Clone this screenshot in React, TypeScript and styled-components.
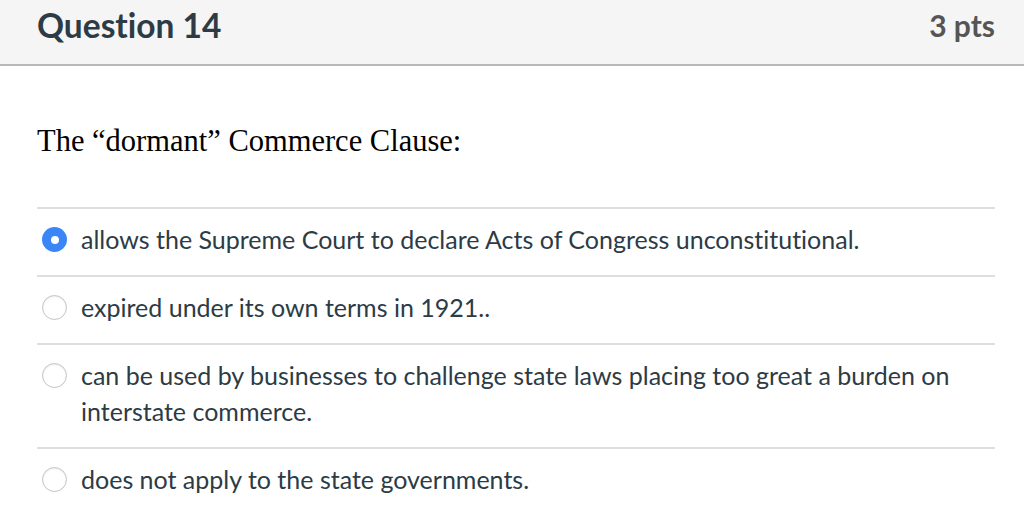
import styled, {createGlobalStyle} from "styled-components"

const GlobalStyle = createGlobalStyle`
    html, body {
        margin: 0;
        padding: 0;
        background: #fff;
    }
`;

const Card = styled.div`
    width: 1024px;
    font-family: Lato, "Liberation Sans", sans-serif;
    font-variant-ligatures: none;
    color: #2d3b45;
`;

const Header = styled.div`
    display: flex;
    justify-content: space-between;
    align-items: center;
    box-sizing: border-box;
    height: 66px;
    padding: 0 29px 14px 37px;
    background-color: #f5f5f5;
    border-bottom: 2px solid #b9b9b9;
`;

const Title = styled.h2`
    margin: 0;
    font-size: 33.5px;
    font-weight: 700;
    color: #2d3b45;
`;

const Points = styled.span`
    font-size: 30px;
    font-weight: 700;
    color: #555;
`;

const Body = styled.div`
    padding: 0 29px 0 37px;
`;

const Prompt = styled.p`
    margin: 0;
    padding: 54px 0 45px 0;
    font-family: "Liberation Serif", "Times New Roman", serif;
    font-size: 30.5px;
    line-height: 42px;
    color: #000;
`;

const Answers = styled.div`
    display: flex;
    flex-direction: column;
`;

const Answer = styled.label`
    display: grid;
    grid-template-columns: 44px 1fr;
    align-items: start;
    padding: 12px 0 18px 0;
    border-top: 2px solid #dedede;
`;

const Radio = styled.span<{checked?: boolean}>`
    box-sizing: border-box;
    width: 25px;
    height: 25px;
    margin: 6px 0 0 5px;
    border-radius: 50%;
    background-color: ${props => props.checked ? "#3b86f7" : "#fff"};
    border: ${props => props.checked ? "none" : "1.5px solid #c4c4c4"};
    box-shadow: ${props => props.checked ? "none" : "inset 0 1px 2px rgba(0,0,0,0.08)"};
    display: grid;
    place-items: center;
    &::after {
        content: "";
        display: ${props => props.checked ? "block" : "none"};
        width: 8px;
        height: 8px;
        border-radius: 50%;
        background: #fff;
    }
`;

const AnswerText = styled.span`
    font-size: 25px;
    line-height: 36px;
    color: #2d3b45;
`;

const answers = [
    {text: "allows the Supreme Court to declare Acts of Congress unconstitutional.", checked: true},
    {text: "expired under its own terms in 1921..", checked: false},
    {text: "can be used by businesses to challenge state laws placing too great a burden on interstate commerce.", checked: false},
    {text: "does not apply to the state governments.", checked: false},
];

const App = () => {
    return (
        <>
            <GlobalStyle />
            <Card>
                <Header>
                    <Title>Question 14</Title>
                    <Points>3 pts</Points>
                </Header>
                <Body>
                    <Prompt>The “dormant” Commerce Clause:</Prompt>
                    <Answers>
                        {answers.map(a => (
                            <Answer key={a.text}>
                                <Radio checked={a.checked} />
                                <AnswerText>{a.text}</AnswerText>
                            </Answer>
                        ))}
                    </Answers>
                </Body>
            </Card>
        </>
    )
}

export default App
